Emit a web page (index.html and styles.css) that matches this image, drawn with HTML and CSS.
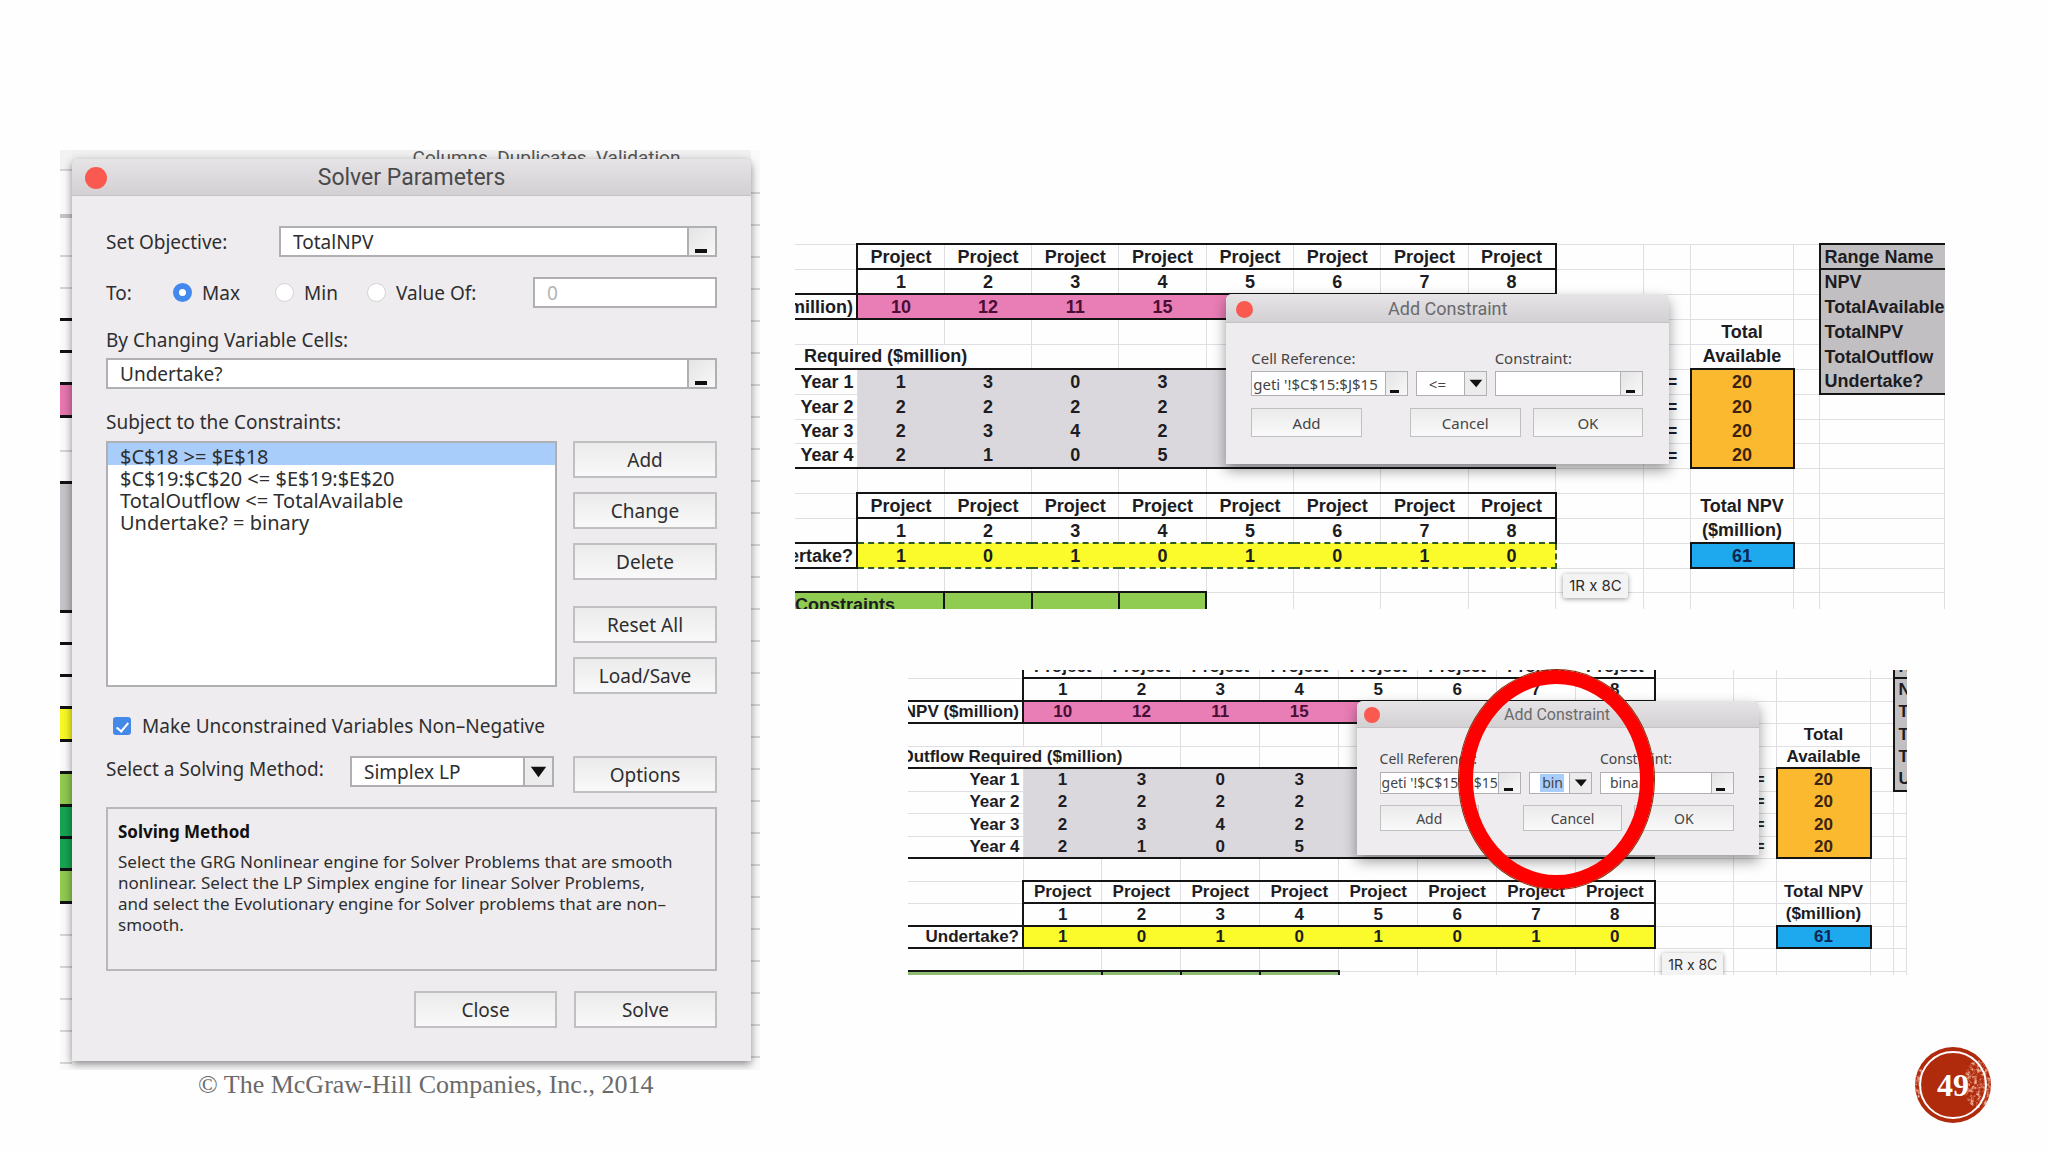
FILE: index.html
```html
<!DOCTYPE html>
<html lang="en">
<head>
<meta charset="utf-8">
<title>Solver constraints</title>
<link rel="stylesheet" href="styles.css">
</head>
<body>
<main class="slide">
  <section class="solver">
    <div class="strip">
      <i class="c21"></i><i class="c47 ruler"></i><i class="c39"></i><i></i><i class="k"></i><i class="k"></i><i class="k"></i><i class="k pink"></i>
      <i class="c34"></i><i class="k"></i><i class="k c128 grey"></i><i class="k"></i><i class="k"></i><i class="k"></i><i class="k yellow"></i><i class="k"></i>
      <i class="k lime"></i><i class="k green"></i><i class="k green"></i><i class="k lime"></i><i></i><i></i><i></i><i></i><i></i>
    </div>
    <div class="middle">
      <p class="ribbon"><span>Columns&nbsp; Duplicates&nbsp; Validation</span></p>
      <form class="window">
        <header class="bar"><span class="dot"></span><h1>Solver Parameters</h1></header>
        <div class="body">
          <div class="row objective">
            <label for="obj">Set Objective:</label>
            <span class="field"><input id="obj" value="TotalNPV"><button type="button" class="pick" aria-label="Pick cell"></button></span>
          </div>
          <div class="row to">
            <span class="to-label">To:</span>
            <label><input type="radio" name="to" checked>Max</label>
            <label><input type="radio" name="to">Min</label>
            <label><input type="radio" name="to">Value Of:</label>
            <span class="field value"><input aria-label="Value" placeholder="0"></span>
          </div>
          <label class="caption" for="cells">By Changing Variable Cells:</label>
          <span class="field"><input id="cells" value="Undertake?"><button type="button" class="pick" aria-label="Pick cells"></button></span>
          <label class="caption subject" for="list">Subject to the Constraints:</label>
          <div class="cols">
            <select id="list" class="list" size="4">
              <option selected>$C$18 &gt;= $E$18</option>
              <option>$C$19:$C$20 &lt;= $E$19:$E$20</option>
              <option>TotalOutflow &lt;= TotalAvailable</option>
              <option>Undertake? = binary</option>
            </select>
            <div class="stack">
              <button type="button">Add</button>
              <button type="button">Change</button>
              <button type="button">Delete</button>
              <button type="button" class="apart">Reset All</button>
              <button type="button">Load/Save</button>
            </div>
          </div>
          <label class="check"><input type="checkbox" checked>Make Unconstrained Variables Non–Negative</label>
          <div class="cols method">
            <div class="choose">
              <label for="method">Select a Solving Method:</label>
              <span class="field combo"><select id="method"><option>Simplex LP</option></select><svg class="arrow" viewBox="0 0 28 28"><path d="M6 9h16l-8 11z"/></svg></span>
            </div>
            <div class="stack"><button type="button">Options</button></div>
          </div>
          <div class="info">
            <h2>Solving Method</h2>
            <p>Select the GRG Nonlinear engine for Solver Problems that are smooth<br>nonlinear. Select the LP Simplex engine for linear Solver Problems,<br>and select the Evolutionary engine for Solver problems that are non–<br>smooth.</p>
          </div>
          <div class="actions"><button type="button">Close</button><button type="button">Solve</button></div>
        </div>
      </form>
    </div>
    <div class="strip plain"></div>
  </section>

  <section class="right">
    <div class="shot one">
      <div class="clip">
        <table>
          <colgroup><col class="w-label"><col span="8"><col class="w-gap"><col class="w-op"><col class="w-total"><col class="w-thin"><col class="w-names"></colgroup>
          <tr class="head names first"><td><td>Project<td>Project<td>Project<td>Project<td>Project<td>Project<td>Project<td>Project<td><td><td><td><td>Range Name
          <tr class="num names"><td><td>1<td>2<td>3<td>4<td>5<td>6<td>7<td>8<td><td><td><td><td>NPV
          <tr class="npv names"><td><b>NPV ($million)</b><td>10<td>12<td>11<td>15<td><td><td><td><td><td><td><td><td>TotalAvailable
          <tr class="names word"><td><td><td><td><td><td><td><td><td><td><td><td>Total<td><td>TotalNPV
          <tr class="names word req"><td colspan="3"><b>Required ($million)</b><td><td><td><td><td><td><td><td><td>Available<td><td>TotalOutflow
          <tr class="year y1 names last"><td><b>Year 1</b><td>1<td>3<td>0<td>3<td><td><td><td><td><td>&lt;=<td>20<td><td>Undertake?
          <tr class="year"><td><b>Year 2</b><td>2<td>2<td>2<td>2<td><td><td><td><td><td>&lt;=<td>20<td><td>
          <tr class="year short"><td><b>Year 3</b><td>2<td>3<td>4<td>2<td><td><td><td><td><td>&lt;=<td>20<td><td>
          <tr class="year y4"><td><b>Year 4</b><td>2<td>1<td>0<td>5<td><td><td><td><td><td>&lt;=<td>20<td><td>
          <tr class="blank"><td><td><td><td><td><td><td><td><td><td><td><td><td><td>
          <tr class="head top word"><td><td>Project<td>Project<td>Project<td>Project<td>Project<td>Project<td>Project<td>Project<td><td><td>Total NPV<td><td>
          <tr class="num word above"><td><td>1<td>2<td>3<td>4<td>5<td>6<td>7<td>8<td><td><td>($million)<td><td>
          <tr class="take"><td><b>Undertake?</b><td>1<td>0<td>1<td>0<td>1<td>0<td>1<td>0<td><td><td>61<td><td>
          <tr class="short"><td><td><td><td><td><td><td><td><td><td><td><td><td><td>
          <tr class="cons"><td colspan="2">Constraints<td><td><td><td><td><td><td><td><td><td><td><td>
        </table>
        <span class="tip">1R x 8C</span>
      </div>
      <form class="window small">
        <header class="bar"><span class="dot"></span><h2>Add Constraint</h2></header>
        <div class="grid">
          <label for="r1">Cell Reference:</label><label class="third" for="k1">Constraint:</label>
          <span class="field"><input id="r1" value="geti '!$C$15:$J$15"><button type="button" class="pick" aria-label="Pick cells"></button></span>
          <span class="field combo"><select aria-label="Operator"><option>&lt;=</option></select><svg class="arrow" viewBox="0 0 28 28"><path d="M6 9h17l-8 10z"/></svg></span>
          <span class="field"><input id="k1"><button type="button" class="pick" aria-label="Pick value"></button></span>
        </div>
        <div class="trio"><button type="button">Add</button><button type="button">Cancel</button><button type="button">OK</button></div>
      </form>
    </div>

    <div class="shot two">
      <div class="clip">
        <table>
          <colgroup><col class="w-label"><col span="8"><col class="w-gap"><col class="w-op"><col class="w-total"><col class="w-thin"><col class="w-names"></colgroup>
          <tr class="head names first"><td><td>Project<td>Project<td>Project<td>Project<td>Project<td>Project<td>Project<td>Project<td><td><td><td><td>Range Name
          <tr class="num names"><td><td>1<td>2<td>3<td>4<td>5<td>6<td>7<td>8<td><td><td><td><td>NPV
          <tr class="npv names"><td><b>NPV ($million)</b><td>10<td>12<td>11<td>15<td><td><td><td><td><td><td><td><td>TotalAvailable
          <tr class="names word"><td><td><td><td><td><td><td><td><td><td><td><td>Total<td><td>TotalNPV
          <tr class="names word req"><td colspan="3"><b>Outflow Required ($million)</b><td><td><td><td><td><td><td><td><td>Available<td><td>TotalOutflow
          <tr class="year y1 names last"><td><b>Year 1</b><td>1<td>3<td>0<td>3<td><td><td><td><td><td>&lt;=<td>20<td><td>Undertake?
          <tr class="year"><td><b>Year 2</b><td>2<td>2<td>2<td>2<td><td><td><td><td><td>&lt;=<td>20<td><td>
          <tr class="year short"><td><b>Year 3</b><td>2<td>3<td>4<td>2<td><td><td><td><td><td>&lt;=<td>20<td><td>
          <tr class="year y4"><td><b>Year 4</b><td>2<td>1<td>0<td>5<td><td><td><td><td><td>&lt;=<td>20<td><td>
          <tr class="blank"><td><td><td><td><td><td><td><td><td><td><td><td><td><td>
          <tr class="head top word"><td><td>Project<td>Project<td>Project<td>Project<td>Project<td>Project<td>Project<td>Project<td><td><td>Total NPV<td><td>
          <tr class="num word"><td><td>1<td>2<td>3<td>4<td>5<td>6<td>7<td>8<td><td><td>($million)<td><td>
          <tr class="take"><td><b>Undertake?</b><td>1<td>0<td>1<td>0<td>1<td>0<td>1<td>0<td><td><td>61<td><td>
          <tr class="short"><td><td><td><td><td><td><td><td><td><td><td><td><td><td>
          <tr class="cons"><td colspan="2"><td><td><td><td><td><td><td><td><td><td><td><td>
        </table>
        <span class="tip">1R x 8C</span>
      </div>
      <form class="window small">
        <header class="bar"><span class="dot"></span><h2>Add Constraint</h2></header>
        <div class="grid">
          <label for="r2">Cell Reference:</label><label class="third" for="k2">Constraint:</label>
          <span class="field"><input id="r2" value="geti '!$C$15:$J$15"><button type="button" class="pick" aria-label="Pick cells"></button></span>
          <span class="field combo marked"><select aria-label="Operator"><option>bin</option></select><svg class="arrow" viewBox="0 0 28 28"><path d="M6 9h17l-8 10z"/></svg></span>
          <span class="field roomy"><input id="k2" value="binary"><button type="button" class="pick" aria-label="Pick value"></button></span>
        </div>
        <div class="trio"><button type="button">Add</button><button type="button">Cancel</button><button type="button">OK</button></div>
      </form>
      <div class="ring"></div>
    </div>
  </section>
</main>
<footer class="foot">
  <p>© The McGraw-Hill Companies, Inc., 2014</p>
  <div class="badge">
    <svg viewBox="0 0 78 78" aria-hidden="true">
      <defs>
        <filter id="grain" x="0" y="0" width="100%" height="100%">
          <feTurbulence type="fractalNoise" baseFrequency="0.3" numOctaves="3" seed="4"/>
          <feColorMatrix values="0 0 0 0 0.9  0 0 0 0 0.5  0 0 0 0 0.38  2.6 0 0 0 -1.1"/>
          <feComposite in2="SourceGraphic" operator="in"/>
        </filter>
        <clipPath id="disc"><circle cx="39" cy="39" r="38"/></clipPath>
      </defs>
      <circle cx="39" cy="39" r="38" fill="#b02a0c"/>
      <g clip-path="url(#disc)"><g filter="url(#grain)"><ellipse cx="64" cy="38" rx="14" ry="24"/><ellipse cx="4" cy="32" rx="4" ry="20"/></g></g>
      <circle cx="39" cy="39" r="33" fill="none" stroke="#fff" stroke-width="2"/>
    </svg>
    <span>49</span>
  </div>
</footer>
</body>
</html>
```
FILE: styles.css
```css
* { box-sizing: border-box; margin: 0; }
body { background: #fefefe; min-height: 100vh; font-family: "Liberation Sans", sans-serif; overflow-x: hidden; }
button, input, select { font: inherit; color: inherit; border-radius: 0; min-width: 0; }

.slide { display: grid; grid-template-columns: 700fr 1150fr; gap: 35px; padding: 150px 103px 0 60px; align-items: start; }

/* Solver window over a sliver of the sheet */
.solver { display: grid; grid-template-columns: 12px 1fr 9px; min-height: 920px; background: #f0f0f0; overflow: hidden; }
.strip { display: flex; flex-direction: column; background: #fafafa; overflow: hidden; }
.strip i { height: 32px; flex: none; border-bottom: 2px solid #d4d4d4; }
.strip .k { border-bottom: 3px solid #111; }
.strip .c21 { height: 21px; background: #f2f2f2; }
.strip .c34 { height: 34px; }
.strip .c39 { height: 39px; }
.strip .c47 { height: 47px; }
.strip .c128 { height: 129px; }
.strip .ruler { border-bottom: 4px solid #c4c4c4; }
.strip .pink { background: #e676ae; height: 33px; }
.strip .grey { background: #c4c4c8; }
.strip .yellow { background: #f7f725; height: 33px; }
.strip .lime { background: #8fc950; height: 33px; }
.strip .green { background: #15a351; }
.plain { background: repeating-linear-gradient(#fafafa 0 30px, #d4d4d4 30px 32px); background-position: 0 12px; }
.middle { display: flex; flex-direction: column; padding-bottom: 9px; background: linear-gradient(#f0f0f0 90%, #fafafa 90%); }
.ribbon { height: 9px; overflow: hidden; font: 19px/15px Roboto, sans-serif; color: #555; display: flex; justify-content: center; }
.ribbon span { padding-left: 270px; white-space: nowrap; }

.window { background: #eeecee; color: #2e2e30; font-family: "Noto Sans", sans-serif; font-size: 19px; border-radius: 6px 6px 0 0; box-shadow: 0 3px 8px #0007; position: relative; }
.middle .window { flex: 1; }
.bar { height: 37px; display: flex; align-items: center; padding: 1px 13px 0; background: linear-gradient(#e6e4e6, #d2d0d2); border-bottom: 1px solid #c4c2c4; border-radius: 6px 6px 0 0; }
.bar h1, .bar h2 { flex: 1; text-align: center; padding-right: 22px; font: 23px/26px Roboto, sans-serif; color: #4a4a4c; }
.dot { width: 22px; height: 22px; border-radius: 50%; background: #fa5950; }
.body { padding: 30px 34px 0; display: flex; flex-direction: column; }
.row { display: flex; align-items: center; }
.field { display: flex; height: 31px; background: #fff; border: 2px solid #b0b0b2; }
.field input, .field select { flex: 1; width: 0; border: 0; background: none; padding: 0 0 0 12px; outline: 0; appearance: none; }
.pick { width: 28px; border: 0; border-left: 2px solid #b0b0b2; background: linear-gradient(135deg, #e4e4e4, #f8f8f8); display: flex; justify-content: center; align-items: flex-end; padding: 0 3px 2px 0; }
.pick::after { content: ""; width: 12px; height: 4px; background: #111; }
.arrow { width: 29px; background: #ececec; border-left: 2px solid #b0b0b2; fill: #111; }
.objective .field { flex: 1; margin-left: 51px; }
.objective label { width: 122px; white-space: nowrap; }
.to { margin-top: 20px; }
.to-label { width: 67px; }
.to label { display: flex; align-items: center; gap: 10px; width: 102px; }
.to label:nth-of-type(2) { width: 92px; }
.to label:nth-of-type(3) { white-space: nowrap; width: 120px; }
.to input[type=radio] { appearance: none; flex: none; width: 19px; height: 19px; margin: 0; border-radius: 50%; background: #fff; border: 1px solid #d4d4d4; position: relative; }
.to input[type=radio]:checked { border: 6px solid #4388ec; }
.value { flex: none; width: 184px; margin-left: auto; }
.value ::placeholder { color: #b4b4b4; opacity: 1; }
.caption { line-height: 24px; margin: 20px 0 6px; }
.subject { margin: 21px 0 7px; }
.cols { display: grid; grid-template-columns: 1fr 144px; gap: 16px; align-items: start; }
.list { appearance: none; height: 246px; background: #fff; border: 2px solid #b0b0b2; outline: 0; padding: 0; overflow: hidden; font-size: 20px; }
.list option { height: 22px; min-height: 22px; line-height: 22px; padding: 0 0 0 12px; color: #2e2e30; }
.list option:checked { background: linear-gradient(#a9cdfb, #a9cdfb); color: #2e2e30; }
.stack { display: flex; flex-direction: column; gap: 14px; }
.stack .apart { margin-top: 12px; }
.window button:not(.pick) { height: 37px; border: 2px solid #c0c0c2; background: linear-gradient(#ebebeb, #f9f9f9); padding: 0; }
.check { display: flex; align-items: center; gap: 11px; margin: 20px 0 0 7px; line-height: 24px; white-space: nowrap; }
.check input { appearance: none; width: 18px; height: 18px; margin: 0; border-radius: 3px; background: #4489e8; display: grid; place-items: center; }
.check input::after { content: ""; width: 5px; height: 10px; border: solid #fff; border-width: 0 2px 2px 0; rotate: 40deg; }
.method { margin-top: 18px; }
.choose { display: flex; justify-content: space-between; padding-right: 3px; white-space: nowrap; }
.choose .combo { width: 204px; }
.info { margin-top: 14px; height: 164px; border: 2px solid #b8b8ba; padding: 11px 10px; }
.info h2 { font-size: 17px; line-height: 24px; color: #111; }
.info p { margin-top: 7px; font-size: 17px; line-height: 21px; white-space: nowrap; }
.actions { display: flex; justify-content: flex-end; gap: 17px; margin-top: 20px; }
.actions button { width: 143px; }

/* Worksheets */
.right { padding-top: 93px; }
.shot { position: relative; font-weight: bold; color: #1c1c22; }
.clip { overflow: hidden; position: relative; }
.one { --row: 25px; --fs: 18px; }
.one .clip { height: 366px; }
.two { --row: 22px; --fs: 17px; margin: 61px 38px 0 113px; }
.two .clip { height: 305px; }
.two table { margin-top: -15px; }
table { width: 100%; table-layout: fixed; border-collapse: collapse; font-size: var(--fs); line-height: 20px; }
.one .w-label { width: 62px; } .one .w-gap { width: 88px; } .one .w-op { width: 47px; } .one .w-total { width: 103px; } .one .w-thin { width: 26px; } .one .w-names { width: 125px; }
.two .w-label { width: 115px; } .two .w-gap { width: 79px; } .two .w-op { width: 43px; } .two .w-total { width: 94px; } .two .w-thin { width: 23px; } .two .w-names { width: 13px; }
tr { height: var(--row); }
.one .short { height: 24px; }
.two tr:nth-child(even) { height: 23px; }
td { padding: 0; text-align: center; border: 1px solid #dfdee2; white-space: nowrap; }
td b { display: flex; justify-content: flex-end; overflow: hidden; padding-right: 3px; }
td:first-child { border-left: 0; }
.head td:nth-child(n+2):nth-last-child(n+6) { border-top: 2px solid #141414; border-bottom: 2px solid #141414; }
.num td:nth-last-child(n+6) { border-bottom: 2px solid #141414; }
:is(.head, .num, .npv, .take) td:first-child { border-right: 2px solid #141414; }
:is(.head, .num, .npv, .take) td:nth-child(9) { border-right: 2px solid #141414; }
.npv td:nth-last-child(n+6) { border-bottom: 2px solid #141414; }
.npv td:nth-child(n+2):nth-last-child(n+6) { background: #e97db5; border-left-color: #e97db5; border-right-color: #e97db5; color: #4a0d35; }
.npv td:nth-child(2) { border-left-color: #141414 !important; }
.req td:nth-last-child(n+6), .y4 td:nth-last-child(n+6) { border-bottom: 2px solid #141414; }
.one .req b { padding-right: 64px; }
.two .req b { padding-right: 58px; }
.year td:nth-child(n+2):nth-last-child(n+6) { background: #dad8dd; border-left-color: #dad8dd; border-right-color: #dad8dd; }
.year:not(.y4) td:nth-child(n+2):nth-last-child(n+6) { border-bottom-color: #dad8dd; }
.year td:nth-last-child(3) { background: #fbb92f; border: solid #141414; border-width: 0 2px; color: #3c2410; }
.y1 td:nth-last-child(3) { border-top-width: 2px; }
.y4 td:nth-last-child(3) { border-bottom-width: 2px; }
.take td:nth-last-child(n+6) { border-bottom: 2px solid #141414; }
.take td:nth-child(n+2):nth-last-child(n+6) { background: #fbfb2c; border-left-color: #fbfb2c; }
.take td:nth-child(n+2):nth-child(-n+8) { border-right-color: #fbfb2c; }
.one .take td:nth-child(n+2):nth-last-child(n+6), .one .above td:nth-child(n+2):nth-last-child(n+6) { border-bottom: 2px dashed #2f5a26; }
.one .take td:nth-child(n+2):nth-last-child(n+6) { border-top: 2px dashed #2f5a26; }
.one .take td:nth-child(9) { border-right: 2px dashed #2f5a26; }
.take td:nth-last-child(3) { background: #1ea9ee; border: 2px solid #141414; color: #0d2550; }
.names td:last-child { background: #c1bfc1; border: 0; border-left: 2px solid #141414; text-align: left; padding-left: 4px; }
.first td:last-child { border-top: 2px solid #141414; border-bottom: 2px solid #141414; }
.last td:last-child { border-bottom: 2px solid #141414; }
.cons td:nth-last-child(n+10) { background: #8fcc51; border: 2px solid #141414; border-left: 0; text-align: left; }
.two .cons td:nth-last-child(n+10) { background: #8fbd75; }
.tip { position: absolute; font: 15px/24px Inter, sans-serif; color: #2c2c2c; background: #f4f3f4; box-shadow: 0 1px 5px #0006; border-radius: 2px; padding: 0 6px; }
.one .tip { left: 66.8%; top: 331px; }
.two .tip { left: 75.5%; top: 283px; font-size: 14px; }

/* Add Constraint windows */
.small { position: absolute; font-weight: normal; color: #444446; font-size: 15px; box-shadow: 0 6px 14px #0006; }
.one .small { left: 37.5%; top: 51px; width: 443px; height: 170px; }
.two .small { left: 44.9%; top: 31px; width: 402px; height: 154px; font-size: 14px; }
.small .bar { height: 29px; padding: 2px 10px 0; }
.small .bar h2 { font-size: 18px; line-height: 22px; padding-right: 17px; color: #6a6a6c; }
.small .dot { width: 17px; height: 17px; }
.two .bar { height: 27px; padding: 2px 7px 0; }
.two .bar h2 { font-size: 16px; }
.two .dot { width: 16px; height: 16px; }
.small .grid { display: grid; grid-template-columns: 157fr 71fr 149fr; column-gap: 8px; row-gap: 3px; padding: 25px 26px 0 25px; line-height: 20px; }
.small .third { grid-column: 3; }
.small .field { height: 25px; border-width: 1px; }
.small .field input { padding-left: 1px; }
.small .roomy input { padding-left: 9px; }
.small .pick { width: 22px; border-left-width: 1px; }
.small .pick::after { width: 9px; height: 3px; }
.small .arrow { width: 22px; border-left-width: 1px; }
.small .trio { display: grid; grid-template-columns: 111fr 24fr 111fr 111fr; gap: 12px; padding: 12px 26px 0 25px; }
.small .trio :nth-child(2) { grid-column: 3; }
.small .trio button:not(.pick) { height: 29px; border-width: 1px; }
.two .grid { grid-template-columns: 142fr 63fr 134fr; padding: 21px 25px 0 23px; }
.two .field { height: 22px; }
.two .trio { grid-template-columns: 100fr 20fr 100fr 100fr; padding: 11px 25px 0 23px; }
.two .trio button:not(.pick) { height: 26px; }
.marked select { background: linear-gradient(#a9cdfb, #a9cdfb) 10px 1px / 24px 18px no-repeat; }
.ring { position: absolute; left: 55.2%; top: 0; width: 195px; height: 219px; border: 14px solid #fe0000; border-radius: 50%; outline: 1px solid #8a2a0a; }

.foot { display: flex; justify-content: space-between; align-items: center; margin-top: -24px; padding: 0 56px 0 198px; position: relative; }
.foot p { font: 26px/32px "Liberation Serif", serif; color: #6a6a6a; }
.badge { display: grid; place-items: center; width: 78px; height: 78px; }
.badge > * { grid-area: 1 / 1; }
.badge span { font: bold 32px/36px "Liberation Serif", serif; color: #fff; z-index: 1; }
```
